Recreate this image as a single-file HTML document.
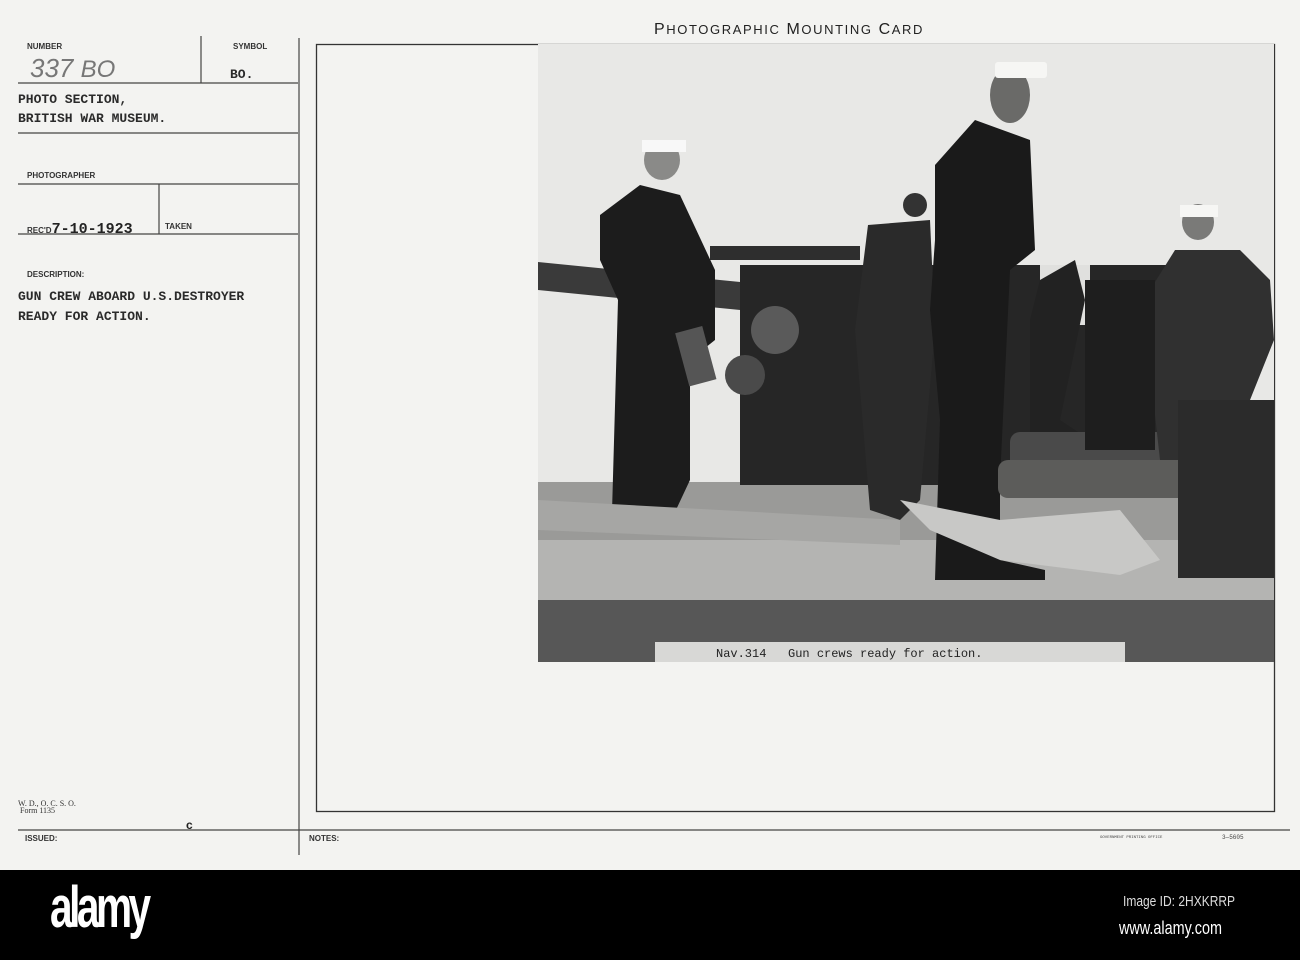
<!DOCTYPE html>
<html><head><meta charset="utf-8"><style>
body{margin:0;width:1300px;height:960px;overflow:hidden;background:#f2f2f0;font-family:"Liberation Mono",monospace}
.t{position:absolute;color:#222;white-space:nowrap}
.s{font-family:"Liberation Sans",sans-serif;font-size:8px;font-weight:bold;color:#333}
.ty{font-family:"Liberation Mono",monospace;font-size:13px;font-weight:bold;color:#2a2a2a}
</style></head><body>
<svg width="1300" height="960" style="position:absolute;left:0;top:0">
<rect width="1300" height="870" fill="#f3f3f1"/>
<g stroke="#444" stroke-width="1.2">
<line x1="18" y1="83" x2="298" y2="83"/>
<line x1="18" y1="133" x2="298" y2="133"/>
<line x1="18" y1="184" x2="298" y2="184"/>
<line x1="18" y1="234" x2="298" y2="234"/>
<line x1="201" y1="36" x2="201" y2="83"/>
<line x1="159" y1="184" x2="159" y2="234"/>
<line x1="299" y1="38" x2="299" y2="855"/>
<line x1="18" y1="830" x2="1290" y2="830"/>
</g>
<rect x="316.5" y="44.5" width="958" height="767" fill="none" stroke="#333" stroke-width="1.3"/>
<rect x="538" y="44" width="736" height="556" fill="#e8e8e6"/>
<rect x="538" y="482" width="736" height="118" fill="#9a9a98"/>
<rect x="538" y="540" width="736" height="60" fill="#b4b4b2"/>
<rect x="538" y="600" width="736" height="62" fill="#575757"/>
<rect x="655" y="642" width="470" height="20" fill="#d8d8d6"/>
<polygon points="538,262 770,285 770,313 538,290" fill="#3a3a3a"/>
<rect x="710" y="246" width="150" height="14" fill="#2e2e2e"/>
<rect x="740" y="265" width="440" height="220" fill="#262626"/>
<rect x="1040" y="265" width="50" height="60" fill="#e0e0de"/>
<circle cx="775" cy="330" r="24" fill="#5a5a5a"/>
<circle cx="745" cy="375" r="20" fill="#4a4a4a"/>
<rect x="1100" y="320" width="80" height="40" fill="#555"/>
<ellipse cx="662" cy="160" rx="18" ry="20" fill="#8a8a88"/>
<rect x="642" y="140" width="44" height="12" fill="#f8f8f8"/>
<path d="M600 215 L640 185 L680 195 L715 270 L715 340 L690 360 L690 480 L675 512 L612 512 L618 300 L600 260Z" fill="#1c1c1c"/>
<rect x="680" y="330" width="28" height="55" fill="#555" transform="rotate(-15 690 350)"/>
<path d="M868 225 L930 220 L935 330 L920 500 L900 520 L870 510 L855 330Z" fill="#2a2a2a"/>
<circle cx="915" cy="205" r="12" fill="#333"/>
<ellipse cx="1010" cy="95" rx="20" ry="28" fill="#6a6a68"/>
<rect x="995" y="62" width="52" height="16" fill="#f6f6f4" rx="3"/>
<path d="M935 165 L975 120 L1030 140 L1035 250 L1010 270 L1000 480 L1000 560 L1045 570 L1045 580 L935 580 L940 420 L930 310 L935 240Z" fill="#1a1a1a"/>
<path d="M1040 280 L1075 260 L1085 300 L1060 420 L1090 440 L1080 450 L1030 440 L1030 320Z" fill="#222"/>
<rect x="1010" y="432" width="190" height="40" fill="#4a4a4a" rx="10"/>
<rect x="998" y="460" width="200" height="38" fill="#5c5c5a" rx="10"/>
<ellipse cx="1198" cy="222" rx="16" ry="18" fill="#7a7a78"/>
<rect x="1180" y="205" width="38" height="12" fill="#f6f6f4"/>
<path d="M1150 290 L1175 250 L1240 250 L1270 280 L1274 340 L1250 400 L1205 400 L1185 460 L1160 460 L1150 370Z" fill="#303030"/>
<rect x="1085" y="280" width="70" height="170" fill="#1e1e1e"/>
<rect x="1178" y="400" width="96" height="178" fill="#2b2b2b"/>
<path d="M900 500 L1000 520 L1120 510 L1160 560 L1120 575 L1000 560 L930 530Z" fill="#c8c8c6"/>
<path d="M538 500 L900 520 L900 545 L538 530Z" fill="#a6a6a4"/>
<rect x="0" y="870" width="1300" height="90" fill="#000"/>
</svg>
<div class="t s" style="left:27px;top:42px">NUMBER</div>
<div class="t s" style="left:233px;top:42px">SYMBOL</div>
<div class="t" style="left:30px;top:53px;font-family:'Liberation Sans',sans-serif;font-size:26px;font-style:italic;color:#777">337 <span style="font-size:24px">BO</span></div>
<div class="t ty" style="left:230px;top:67px">BO.</div>
<div class="t ty" style="left:18px;top:90px;line-height:19px">PHOTO SECTION,<br>BRITISH WAR MUSEUM.</div>
<div class="t s" style="left:27px;top:171px">PHOTOGRAPHER</div>
<div class="t s" style="left:27px;top:221px">REC'D<span style="font-family:'Liberation Mono';font-size:15px;color:#222">7-10-1923</span></div>
<div class="t s" style="left:165px;top:222px">TAKEN</div>
<div class="t s" style="left:27px;top:270px">DESCRIPTION:</div>
<div class="t ty" style="left:18px;top:287px;line-height:20px;font-size:13px">GUN CREW ABOARD U.S.DESTROYER<br>READY FOR ACTION.</div>
<div class="t" style="left:654px;top:21px;font-family:'Liberation Sans',sans-serif;font-size:16px;color:#222;letter-spacing:1.6px">P<span style="font-size:13px">HOTOGRAPHIC</span> M<span style="font-size:13px">OUNTING</span> C<span style="font-size:13px">ARD</span></div>
<div class="t" style="left:18px;top:800px;font-family:'Liberation Serif',serif;font-size:8px;line-height:7px;color:#333">W. D., O. C. S. O.<br>&nbsp;Form 1135</div>
<div class="t s" style="left:25px;top:834px">ISSUED:</div>
<div class="t" style="left:186px;top:818px;font-family:'Liberation Sans';font-size:12px;font-weight:bold">c</div>
<div class="t s" style="left:309px;top:834px">NOTES:</div>
<div class="t" style="left:1100px;top:836px;font-size:4px;color:#444">GOVERNMENT PRINTING OFFICE</div>
<div class="t" style="left:1222px;top:834px;font-size:6px;color:#444">3—5605</div>
<div class="t" style="left:716px;top:647px;font-size:12px;color:#222">Nav.314&nbsp;&nbsp; Gun crews ready for action.</div>
<div class="t" style="left:50px;top:874px;font-family:'Liberation Sans',sans-serif;font-size:58px;font-weight:bold;color:#fff;letter-spacing:-5px;transform:scaleX(0.7);transform-origin:left">alamy</div>
<div class="t" style="left:1123px;top:893px;font-family:'Liberation Sans',sans-serif;font-size:15px;color:#ddd;transform:scaleX(0.8);transform-origin:left">Image ID: 2HXKRRP</div>
<div class="t" style="left:1119px;top:918px;font-family:'Liberation Sans',sans-serif;font-size:18px;color:#fff;transform:scaleX(0.8);transform-origin:left">www.alamy.com</div>
</body></html>
